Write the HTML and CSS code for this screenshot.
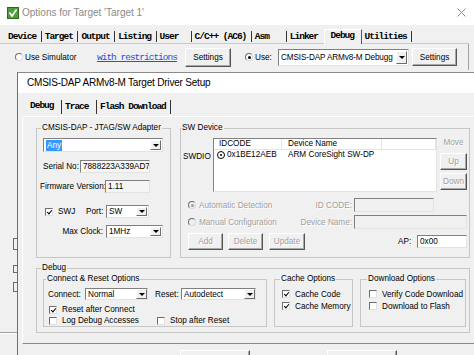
FILE: index.html
```html
<!DOCTYPE html>
<html lang="en">
<head>
    <meta charset="UTF-8">
    <meta name="viewport" content="width=device-width, initial-scale=1.0">
    <title>Options for Target 'Target 1'</title>
    <link rel="stylesheet" href="styles.css">
</head>
<body>
<div class="window">
    <div class="titlebar">
        <svg class="appicon" width="12" height="12" viewBox="0 0 12 12">
            <rect x="0.5" y="0.5" width="11" height="11" fill="#4f9e3c" stroke="#2b6a22"/>
            <path d="M2.5 5.5 L5 9 L9.5 2.5" fill="none" stroke="#fff" stroke-width="1.6"/>
        </svg>
        <span class="title">Options for Target 'Target 1'</span>
        <svg class="close" width="9" height="9" viewBox="0 0 9 9">
            <path d="M0.5 0.5 L8.5 8.5 M8.5 0.5 L0.5 8.5" stroke="#8a8a8a" stroke-width="1"/>
        </svg>
    </div>

    <div class="otabs">
        <span class="otab">Device</span>
        <span class="otab">Target</span>
        <span class="otab">Output</span>
        <span class="otab">Listing</span>
        <span class="otab">User</span>
        <span class="otab">C/C++ (AC6)</span>
        <span class="otab">Asm</span>
        <span class="otab nosep">Linker</span>
        <span class="otab sel">Debug</span>
        <span class="otab">Utilities</span>
    </div>

    <div class="orow">
        <label class="opt sim"><span class="radio"></span>Use Simulator</label>
        <span class="link">with restrictions</span>
        <span class="btn set1">Settings</span>
        <label class="opt use"><span class="radio on"></span>Use:</label>
        <span class="combo drv"><span class="val">CMSIS-DAP ARMv8-M Debugg</span><span class="arr"></span></span>
        <span class="btn set2">Settings</span>
    </div>

    <div class="stage">
        <div class="behind">
            <div class="frag f1"></div>
            <div class="frag f2"></div>
            <div class="frag f3"></div>
            <div class="rule"></div>
        </div>

        <div class="dialog">
            <div class="dtitle">CMSIS-DAP ARMv8-M Target Driver Setup</div>
            <div class="dbody">
                <div class="itabs">
                    <span class="itab sel">Debug</span>
                    <span class="itab">Trace</span>
                    <span class="itab">Flash Download</span>
                </div>

                <div class="page">
                    <div class="toprow">
                        <fieldset class="grp adapter">
                            <legend>CMSIS-DAP - JTAG/SW Adapter</legend>
                            <span class="combo any"><span class="val"><span class="hl">Any</span></span><span class="arr"></span></span>
                            <div class="frow serial">
                                <span class="lbl">Serial No:</span>
                                <span class="edit ro">7888223A339AD7</span>
                            </div>
                            <div class="frow fw">
                                <span class="lbl">Firmware Version:</span>
                                <span class="edit ro">1.11</span>
                            </div>
                            <div class="frow swj">
                                <span class="chk on"></span>
                                <span class="ctext">SWJ</span>
                                <span class="lbl port">Port:</span>
                                <span class="combo pt"><span class="val">SW</span><span class="arr"></span></span>
                            </div>
                            <div class="frow clk">
                                <span class="lbl">Max Clock:</span>
                                <span class="combo ck"><span class="val">1MHz</span><span class="arr"></span></span>
                            </div>
                        </fieldset>

                        <fieldset class="grp swdev">
                            <legend>SW Device</legend>
                            <div class="devtop">
                                <span class="swdio">SWDIO</span>
                                <div class="list">
                                    <div class="lhead">
                                        <span class="c1">IDCODE</span>
                                        <span class="c2">Device Name</span>
                                        <span class="c3"></span>
                                    </div>
                                    <div class="lrow">
                                        <span class="c1"><span class="seldot"></span>0x1BE12AEB</span>
                                        <span class="c2">ARM CoreSight SW-DP</span>
                                    </div>
                                </div>
                                <div class="move">
                                    <span class="mv dis">Move</span>
                                    <span class="btn dis up">Up</span>
                                    <span class="btn dis down">Down</span>
                                </div>
                            </div>
                            <div class="drow ra">
                                <label class="opt rad dis"><span class="radio on"></span>Automatic Detection</label>
                                <span class="lbl dis">ID CODE:</span>
                                <span class="edit off idc"></span>
                            </div>
                            <div class="drow rb">
                                <label class="opt rad dis"><span class="radio"></span>Manual Configuration</label>
                                <span class="lbl dis">Device Name:</span>
                                <span class="edit off dn"></span>
                            </div>
                            <div class="drow rc">
                                <span class="btn dis add">Add</span>
                                <span class="btn dis del">Delete</span>
                                <span class="btn dis upd">Update</span>
                                <span class="aplbl">AP:</span>
                                <span class="edit apv">0x00</span>
                            </div>
                        </fieldset>
                    </div>

                    <fieldset class="grp debug">
                        <legend>Debug</legend>
                        <div class="subs">
                            <fieldset class="grp conn">
                                <legend>Connect &amp; Reset Options</legend>
                                <div class="crow">
                                    <span class="lbl cl">Connect:</span>
                                    <span class="combo cn"><span class="val">Normal</span><span class="arr"></span></span>
                                    <span class="rs">Reset:</span>
                                    <span class="combo rv"><span class="val">Autodetect</span><span class="arr"></span></span>
                                </div>
                                <div class="cline first">
                                    <label class="chkl"><span class="chk on"></span>Reset after Connect</label>
                                </div>
                                <div class="cline">
                                    <label class="chkl wide"><span class="chk"></span>Log Debug Accesses</label>
                                    <label class="chkl"><span class="chk"></span>Stop after Reset</label>
                                </div>
                            </fieldset>

                            <fieldset class="grp cache">
                                <legend>Cache Options</legend>
                                <div class="cline">
                                    <label class="chkl"><span class="chk on"></span>Cache Code</label>
                                </div>
                                <div class="cline">
                                    <label class="chkl"><span class="chk on"></span>Cache Memory</label>
                                </div>
                            </fieldset>

                            <fieldset class="grp dl">
                                <legend>Download Options</legend>
                                <div class="cline">
                                    <label class="chkl"><span class="chk"></span>Verify Code Download</label>
                                </div>
                                <div class="cline">
                                    <label class="chkl"><span class="chk"></span>Download to Flash</label>
                                </div>
                            </fieldset>
                        </div>
                    </fieldset>
                </div>

                <div class="foot">
                    <span class="btn big"></span>
                    <span class="btn big"></span>
                </div>
            </div>
        </div>
    </div>
</div>
</body>
</html>
```

FILE: styles.css
```css
* {
    box-sizing: border-box;
}
body {
    margin: 0;
    background-color: #f0f0f0;
    font-family: "Liberation Sans", Arial, sans-serif;
    font-size: 8.2px;
    color: #000;
}
.window {
    width: 474px;
    height: 355px;
    overflow: hidden;
    display: flex;
    flex-direction: column;
}

/* outer window title */
.titlebar {
    flex: none;
    height: 25px;
    background-color: #fff;
    display: flex;
    align-items: center;
    padding: 0 8px 0 7px;
}
.appicon {
    margin-right: 3px;
}
.title {
    flex: 1;
    font-size: 10px;
    color: #8a8a8a;
}

/* outer tabs */
.otabs {
    flex: none;
    width: 469px;
    height: 19px;
    display: flex;
    align-items: flex-end;
    padding-left: 5px;
    border-bottom: 1px solid #cacaca;
    font-family: "Liberation Mono", monospace;
    font-weight: bold;
    font-size: 9.5px;
    letter-spacing: -1px;
}
.otab {
    height: 11px;
    line-height: 11px;
    min-width: 35px;
    padding: 0 4.5px 0 3px;
    margin-bottom: 1px;
    border-right: 1px solid #333;
    white-space: nowrap;
}
.otab.nosep {
    border-right-color: transparent;
}
.otab.sel {
    height: 15px;
    min-width: 38px;
    margin-bottom: -1px;
    padding-left: 6px;
    background-color: #f0f0f0;
    border-top: 1px solid #fff;
    border-left: 1px solid #fff;
    border-right-color: #555;
}

/* outer row */
.orow {
    flex: none;
    width: 469px;
    height: 26px;
    display: flex;
    align-items: center;
    border-right: 1px solid #a0a0a0;
}
.opt {
    display: flex;
    align-items: center;
    gap: 2px;
    white-space: nowrap;
}
.sim {
    width: 82px;
    margin-left: 15px;
}
.link {
    width: 88px;
    font-family: "Liberation Mono", monospace;
    font-size: 9.5px;
    letter-spacing: -1px;
    color: #2a4fd6;
    text-decoration: underline;
    white-space: nowrap;
}
.set1 {
    width: 46px;
    height: 19px;
}
.use {
    width: 33px;
    margin-left: 14px;
}
.drv {
    width: 131px;
    height: 17px;
}
.drv .val {
    padding-left: 1px;
    letter-spacing: -0.12px;
}
.set2 {
    width: 45px;
    height: 18px;
    margin-left: 3px;
}

/* controls */
.radio {
    flex: none;
    width: 8px;
    height: 8px;
    border-radius: 50%;
    background-color: #fff;
    border: 1px solid;
    border-color: #6f6f6f #d8d8d8 #d8d8d8 #6f6f6f;
    display: flex;
    align-items: center;
    justify-content: center;
}
.radio.on::after {
    content: "";
    width: 3px;
    height: 3px;
    border-radius: 50%;
    background-color: #000;
}
.dis .radio {
    background-color: #f0f0f0;
}
.dis .radio.on::after {
    background-color: #a0a0a0;
}
.chk {
    flex: none;
    width: 8px;
    height: 8px;
    background-color: #fff;
    border: 1px solid;
    border-color: #6d6d6d #e0e0e0 #e0e0e0 #6d6d6d;
    display: flex;
    align-items: center;
    justify-content: center;
}
.chk.on::after {
    content: "";
    width: 2px;
    height: 4px;
    margin-top: -1px;
    border: solid #000;
    border-width: 0 1.4px 1.4px 0;
    transform: rotate(40deg);
}
.btn {
    flex: none;
    display: flex;
    align-items: center;
    justify-content: center;
    background-color: #f0f0f0;
    border: 1px solid;
    border-color: #fff #555 #555 #fff;
    box-shadow: inset -1px -1px 0 #a8a8a8;
    white-space: nowrap;
}
.dis {
    color: #a0a0a0;
    text-shadow: 1px 1px 0 #fff;
}
.combo {
    flex: none;
    display: flex;
    background-color: #fff;
    border: 1px solid;
    border-color: #7f7f7f #e3e3e3 #e3e3e3 #7f7f7f;
}
.combo .val {
    flex: 1;
    display: flex;
    align-items: center;
    padding-left: 2px;
    overflow: hidden;
    white-space: nowrap;
}
.combo .arr {
    flex: none;
    width: 11px;
    margin: 1px;
    background-color: #f0f0f0;
    border: 1px solid;
    border-color: #fff #6b6b6b #6b6b6b #fff;
    display: flex;
    align-items: center;
    justify-content: center;
}
.combo .arr::after {
    content: "";
    border-left: 3px solid transparent;
    border-right: 3px solid transparent;
    border-top: 3px solid #000;
}
.hl {
    background-color: #3399ff;
    color: #fff;
    padding: 1px 1px;
}
.edit {
    flex: none;
    display: flex;
    align-items: center;
    padding-left: 2px;
    background-color: #fff;
    border: 1px solid;
    border-color: #7f7f7f #e3e3e3 #e3e3e3 #7f7f7f;
    overflow: hidden;
    white-space: nowrap;
}
.edit.ro {
    background-color: #f5f5f5;
}
.edit.off {
    background-color: #f0f0f0;
}
.lbl {
    flex: none;
    text-align: right;
    white-space: nowrap;
    margin-right: 2px;
}

/* stage with the driver setup dialog */
.stage {
    flex: 1;
    min-height: 0;
    display: flex;
}
.behind {
    flex: none;
    width: 17px;
}
.frag {
    width: 4px;
    margin-left: 13px;
    border: 1px solid #6a6a6a;
    border-right: none;
}
.f1 {
    height: 12px;
    margin-top: 168px;
}
.f2 {
    height: 8px;
    margin-top: 15px;
}
.f3 {
    height: 10px;
    margin-top: 9px;
}
.rule {
    height: 2px;
    margin-top: 40px;
    border-top: 1px solid #a0a0a0;
    border-bottom: 1px solid #fff;
}
.dialog {
    flex: 1;
    min-width: 0;
    margin-top: 2px;
    background-color: #f0f0f0;
    border-top: 1px solid #8a8a8a;
    border-left: 1px solid #6e6e6e;
}
.dtitle {
    height: 20px;
    line-height: 20px;
    padding-left: 9px;
    background-color: #fff;
    font-size: 10px;
    letter-spacing: -0.2px;
    white-space: nowrap;
}
.dbody {
    padding: 3px 0 0 4px;
}
.itabs {
    height: 20px;
    display: flex;
    align-items: flex-end;
    padding-left: 5px;
    font-family: "Liberation Mono", monospace;
    font-weight: bold;
    font-size: 9.5px;
    letter-spacing: -1px;
}
.itab {
    height: 14px;
    line-height: 13px;
    min-width: 35px;
    padding: 0 4px 0 3px;
    margin-bottom: 2px;
    border-right: 1px solid #333;
    white-space: nowrap;
}
.itab.sel {
    line-height: 11px;
}
.page {
    width: 460px;
    height: 228px;
    padding: 6px 0 0 13px;
    border-top: 1px solid #fff;
    border-left: 1px solid #fff;
    border-bottom: 1px solid #8a8a8a;
}
.toprow {
    display: flex;
    gap: 9px;
}

/* group boxes */
.grp {
    margin: 0;
    min-width: 0;
    border: 1px solid #c6c6c6;
}
.grp legend {
    height: 10px;
    line-height: 10px;
    padding: 0 1px;
    margin-left: -2px;
    white-space: nowrap;
}
.adapter {
    width: 135px;
    height: 135px;
    padding: 5px 0 0 6px;
}
.swdev {
    width: 290px;
    height: 135px;
    padding: 5px 0 0 2px;
}
.debug {
    width: 434px;
    height: 70px;
    margin-top: 5px;
    padding: 1px 0 0 6px;
}

/* adapter group */
.any {
    width: 120px;
    height: 14px;
    margin-bottom: 8px;
}
.frow {
    display: flex;
    align-items: center;
    height: 13px;
}
.serial .lbl {
    width: 35px;
}
.serial .edit {
    width: 70px;
    height: 13px;
}
.fw {
    margin-top: 7px;
    margin-left: -3px;
}
.fw .lbl {
    width: 63px;
}
.fw .edit {
    width: 45px;
    height: 13px;
}
.swj {
    margin-top: 12px;
    padding-left: 2px;
}
.ctext {
    width: 28px;
    margin-left: 5px;
}
.lbl.port {
    width: 18px;
    text-align: left;
}
.pt {
    width: 43px;
    height: 13px;
}
.clk {
    margin-top: 7px;
}
.clk .lbl {
    width: 60px;
    margin-right: 3px;
}
.ck {
    width: 57px;
    height: 13px;
}

/* sw device group */
.devtop {
    display: flex;
    height: 54px;
}
.swdio {
    width: 30px;
    padding-top: 14px;
}
.list {
    width: 224px;
    height: 54px;
    background-color: #fff;
    border: 1px solid;
    border-color: #828282 #e3e3e3 #e3e3e3 #828282;
}
.lhead {
    display: flex;
    height: 11px;
    line-height: 10px;
    border-bottom: 1px solid #e3e3e3;
}
.lhead span {
    border-right: 1px solid #e3e3e3;
}
.lrow {
    display: flex;
    height: 10px;
    line-height: 10px;
}
.c1 {
    width: 68px;
    padding-left: 5px;
}
.c2 {
    width: 100px;
    padding-left: 6px;
    white-space: nowrap;
}
.c3 {
    width: 54px;
}
.lrow .c1 {
    display: flex;
    align-items: center;
    gap: 2px;
    padding-left: 3px;
}
.seldot {
    flex: none;
    width: 8px;
    height: 8px;
    border: 1.5px solid #000;
    border-radius: 50%;
    display: flex;
    align-items: center;
    justify-content: center;
}
.seldot::after {
    content: "";
    width: 2px;
    height: 2px;
    border-radius: 50%;
    background-color: #000;
}
.move {
    width: 27px;
    margin-left: 3px;
    display: flex;
    flex-direction: column;
}
.mv {
    line-height: 10px;
    text-align: center;
}
.up {
    height: 17px;
    margin-top: 5px;
}
.down {
    height: 17px;
    margin-top: 3px;
}
.drow {
    display: flex;
    align-items: center;
    height: 14px;
    padding-left: 5px;
}
.ra {
    margin-top: 6px;
}
.rb {
    margin-top: 3px;
}
.rc {
    height: 17px;
    margin-top: 4px;
}
.rad {
    width: 108px;
    gap: 3px;
}
.drow .lbl {
    width: 56px;
}
.idc {
    width: 80px;
    height: 14px;
}
.dn {
    width: 113px;
    height: 14px;
}
.add,
.del {
    width: 35px;
    height: 17px;
}
.del {
    margin-left: 5px;
}
.upd {
    width: 36px;
    height: 17px;
    margin-left: 6px;
}
.aplbl {
    width: 17px;
    margin: 0 2px 0 93px;
}
.apv {
    width: 50px;
    height: 13px;
}

/* debug group */
.subs {
    display: flex;
    gap: 7px;
}
.conn {
    width: 224px;
    height: 53px;
    padding: 4px 0 0 4px;
}
.cache {
    width: 79px;
    height: 53px;
    padding: 4px 0 0 7px;
}
.dl {
    width: 106px;
    height: 53px;
    padding: 4px 0 0 8px;
}
.crow {
    display: flex;
    align-items: center;
    height: 12px;
}
.lbl.cl {
    width: 36px;
    text-align: left;
    margin-right: 1px;
}
.cn {
    width: 63px;
    height: 12px;
}
.rs {
    width: 25px;
    margin: 0 1px 0 7px;
}
.rv {
    width: 75px;
    height: 12px;
}
.combo.cn .arr,
.combo.rv .arr {
    margin: 0;
}
.cline {
    display: flex;
    align-items: center;
    height: 12px;
}
.conn .cline {
    height: 11px;
    padding-left: 1px;
}
.conn .cline.first {
    margin-top: 4px;
}
.chkl {
    display: flex;
    align-items: center;
    gap: 5px;
    white-space: nowrap;
}
.chkl.wide {
    width: 108px;
}

/* dialog buttons, only their top edge is in view */
.foot {
    display: flex;
    gap: 77px;
    padding: 6px 0 0 158px;
}
.big {
    width: 70px;
    height: 22px;
}
```
